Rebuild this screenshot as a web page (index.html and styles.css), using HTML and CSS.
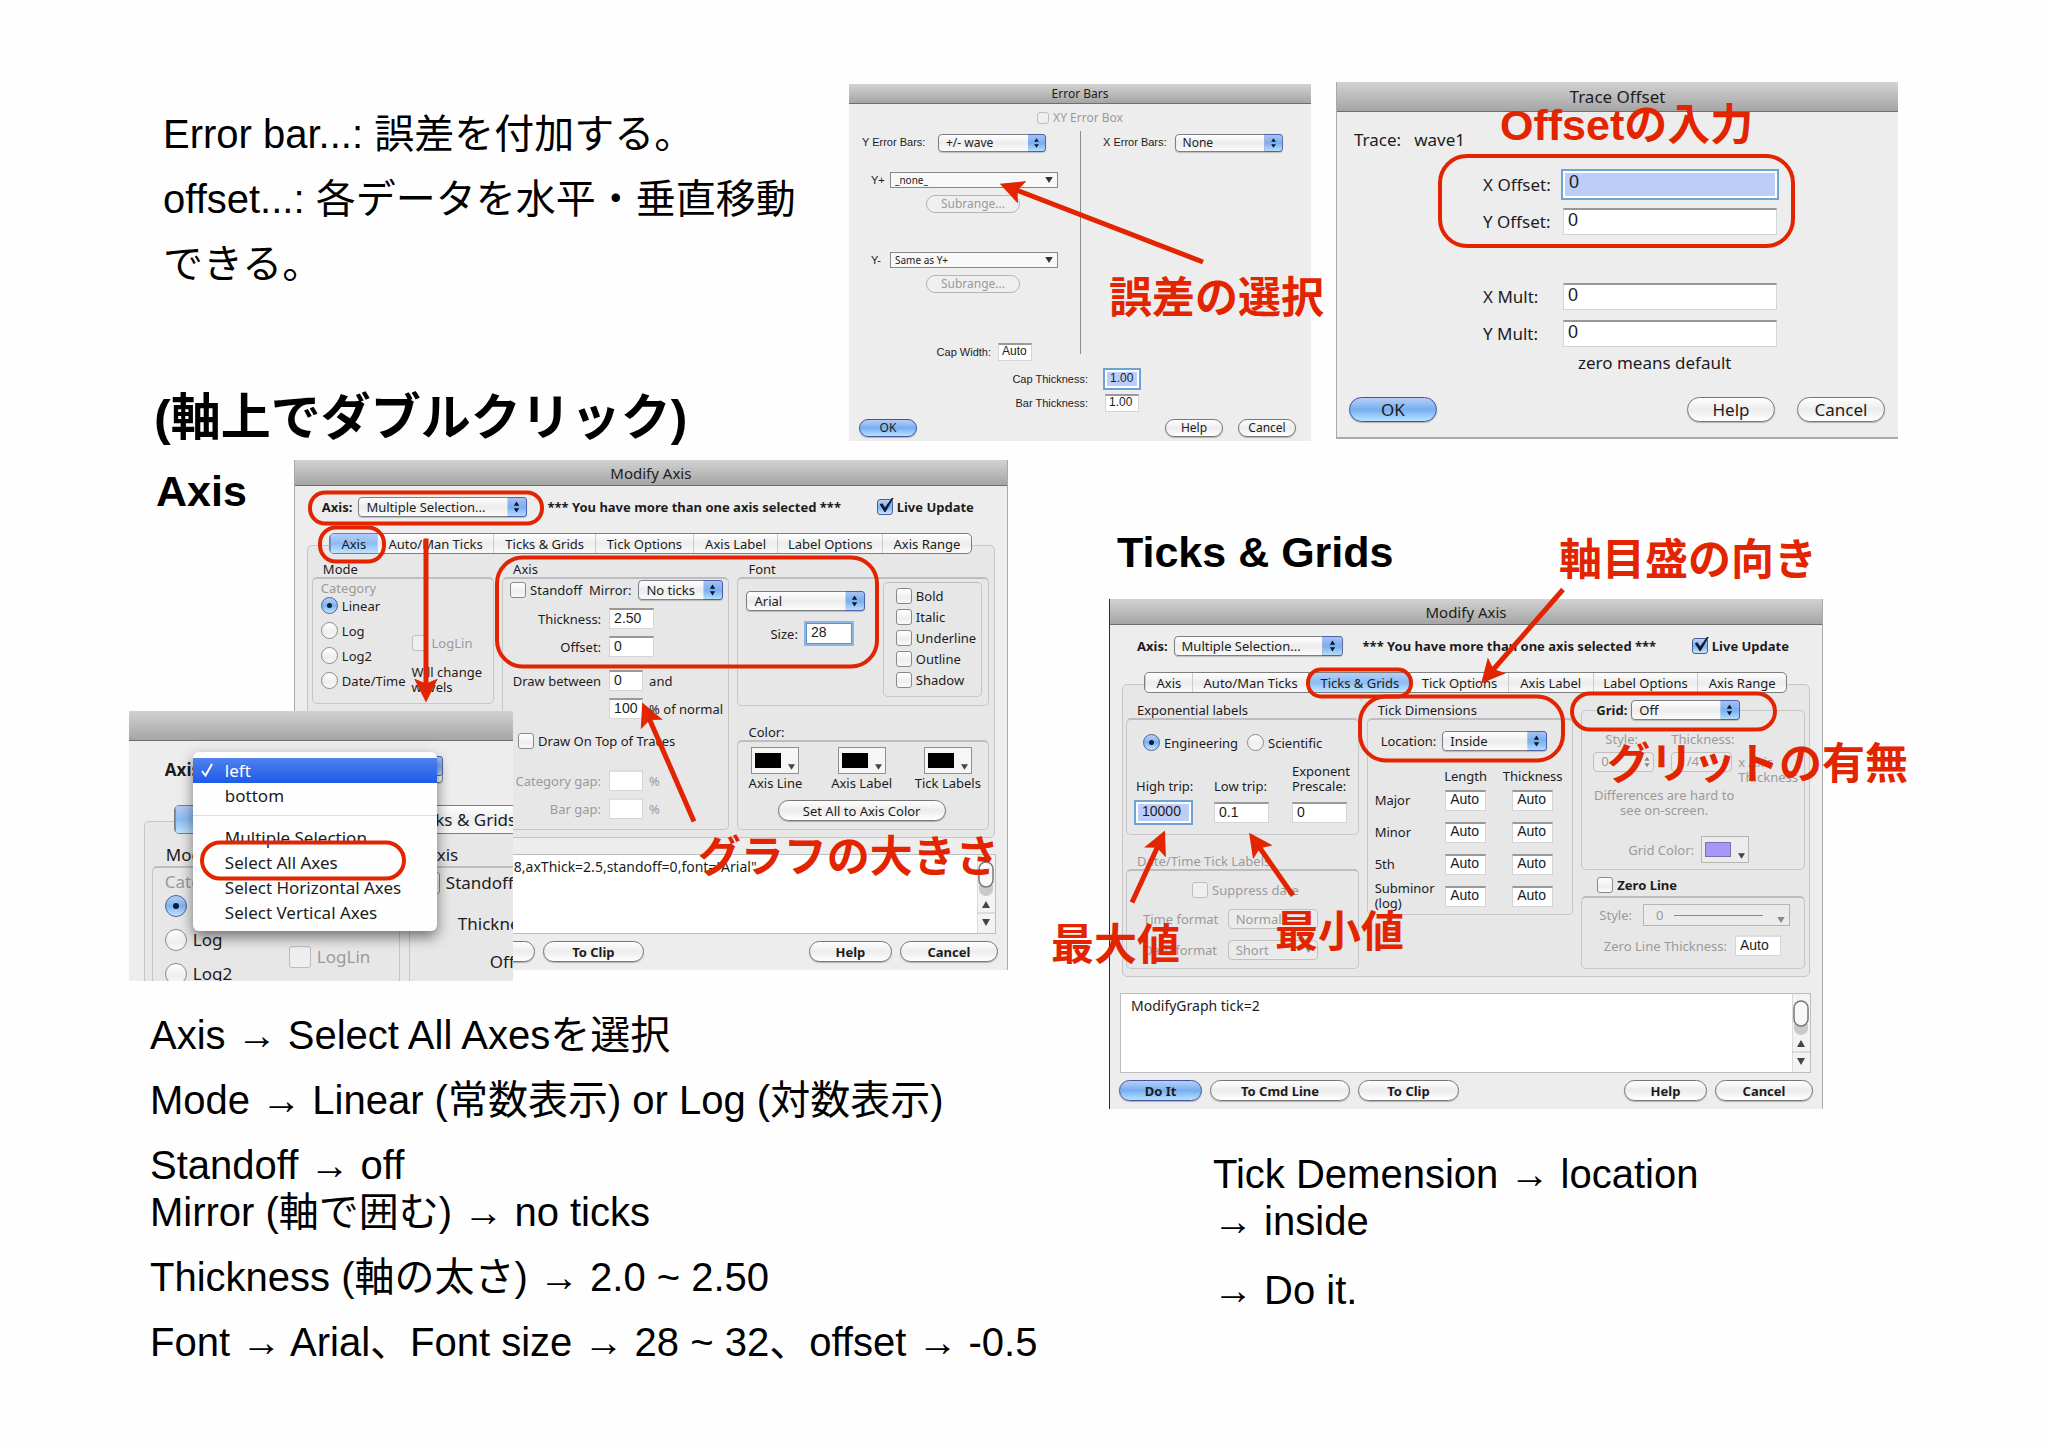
FILE: index.html
```html
<!DOCTYPE html>
<html lang="ja">
<head>
    <meta charset="UTF-8">
    <meta name="viewport" content="width=device-width, initial-scale=1.0">
    <title>Modify Axis</title>
    <link rel="stylesheet" href="styles.css">
</head>
<body>
    <!-- Shared shapes -->
    <svg class="defs" width="0" height="0" aria-hidden="true">
        <symbol id="updown" viewBox="0 0 14 20">
            <path d="M7 4l3 4.500H4zM7 16l3-4.500H4z" />
        </symbol>
        <symbol id="down" viewBox="0 0 10 8">
            <path d="M0 0h10L5 8z" />
        </symbol>
        <marker id="head" markerUnits="userSpaceOnUse" markerWidth="26" markerHeight="26" refX="12" refY="12" orient="auto">
            <path d="M24 12L0 0L5 12L0 24z" fill="#e22400" />
        </marker>
    </svg>

    <main class="slide">
        <section class="top">
            <div class="intro">
                <p>Error bar...: 誤差を付加する。</p>
                <p>offset...: 各データを水平・垂直移動できる。</p>
                <h1>(軸上でダブルクリック)</h1>
            </div>

            <!-- Error Bars -->
            <div class="figure error-figure">
                <form class="dialog error-bars">
                    <div class="titlebar">Error Bars</div>
                    <label class="check xy-box dim"><input type="checkbox" disabled> XY Error Box</label>
                    <div class="error-columns">
                        <div class="error-y">
                            <div class="line">
                                <label class="plain" for="yBars">Y Error Bars:</label>
                                <span class="popup"><select id="yBars"><option>+/- wave</option></select><svg><use href="#updown" /></svg></span>
                            </div>
                            <div class="line wave-line">
                                <label class="plain" for="yPlus">Y+</label>
                                <span class="combo"><select id="yPlus"><option>_none_</option></select><svg><use href="#down" /></svg></span>
                            </div>
                            <button type="button" class="btn dim" disabled>Subrange...</button>
                            <div class="line wave-line second">
                                <label class="plain" for="yMinus">Y-</label>
                                <span class="combo"><select id="yMinus"><option>Same as Y+</option></select><svg><use href="#down" /></svg></span>
                            </div>
                            <button type="button" class="btn dim" disabled>Subrange...</button>
                            <div class="line cap-line">
                                <label class="plain" for="capWidth">Cap Width:</label>
                                <input class="field" id="capWidth" type="text" value="Auto">
                            </div>
                        </div>
                        <div class="error-x">
                            <label class="plain" for="xBars">X Error Bars:</label>
                            <span class="popup"><select id="xBars"><option>None</option></select><svg><use href="#updown" /></svg></span>
                        </div>
                    </div>
                    <div class="thickness">
                        <label class="plain" for="capThick">Cap Thickness:</label>
                        <input class="field focus picked" id="capThick" type="text" value="1.00">
                        <label class="plain" for="barThick">Bar Thickness:</label>
                        <input class="field" id="barThick" type="text" value="1.00">
                    </div>
                    <div class="buttons">
                        <button type="button" class="btn primary">OK</button>
                        <button type="button" class="btn push">Help</button>
                        <button type="button" class="btn">Cancel</button>
                    </div>
                </form>
                <svg class="marks" viewBox="0 0 462 357" aria-hidden="true">
                    <line x1="354" y1="178" x2="162" y2="104" />
                </svg>
                <div class="caption cap-error">誤差の選択</div>
            </div>

            <!-- Trace Offset -->
            <div class="figure trace-figure">
                <form class="dialog trace-offset">
                    <div class="titlebar">Trace Offset</div>
                    <p class="trace-name"><span>Trace:</span> <span>wave1</span></p>
                    <div class="trace-grid">
                        <label for="xOffset">X Offset:</label>
                        <input class="field focus picked" id="xOffset" type="text" value="0">
                        <label for="yOffset">Y Offset:</label>
                        <input class="field" id="yOffset" type="text" value="0">
                    </div>
                    <div class="trace-grid mult">
                        <label for="xMult">X Mult:</label>
                        <input class="field" id="xMult" type="text" value="0">
                        <label for="yMult">Y Mult:</label>
                        <input class="field" id="yMult" type="text" value="0">
                    </div>
                    <p class="hint">zero means default</p>
                    <div class="buttons">
                        <button type="button" class="btn primary">OK</button>
                        <button type="button" class="btn push">Help</button>
                        <button type="button" class="btn">Cancel</button>
                    </div>
                </form>
                <svg class="marks" viewBox="0 0 562 357" aria-hidden="true">
                    <rect x="104" y="74" width="353" height="90" rx="27" />
                </svg>
                <div class="caption cap-offset">Offsetの入力</div>
            </div>
        </section>

        <section class="bottom">
            <div class="left">
                <div class="axis-row">
                    <h2>Axis</h2>

                    <!-- Modify Axis, first tab -->
                    <div class="figure">
                        <form class="dialog modify">
                            <div class="titlebar">Modify Axis</div>
                            <div class="select-row">
                                <label class="strong" for="axisA">Axis:</label>
                                <span class="popup"><select id="axisA"><option>Multiple Selection...</option></select><svg><use href="#updown" /></svg></span>
                                <span class="message">*** You have more than one axis selected ***</span>
                                <label class="check strong"><input type="checkbox" checked> Live Update</label>
                            </div>
                            <div class="tabs">
                                <button type="button" class="on">Axis</button>
                                <button type="button">Auto/Man Ticks</button>
                                <button type="button">Ticks &amp; Grids</button>
                                <button type="button">Tick Options</button>
                                <button type="button">Axis Label</button>
                                <button type="button">Label Options</button>
                                <button type="button">Axis Range</button>
                            </div>
                            <div class="pane axis-pane">
                                <div class="col">
                                    <h3>Mode</h3>
                                    <div class="box mode-box">
                                        <div class="radios">
                                            <span class="dim">Category</span>
                                            <label class="check"><input type="radio" name="mode" checked> Linear</label>
                                            <label class="check"><input type="radio" name="mode"> Log</label>
                                            <label class="check"><input type="radio" name="mode"> Log2</label>
                                            <label class="check"><input type="radio" name="mode"> Date/Time</label>
                                        </div>
                                        <div class="mode-side">
                                            <label class="check dim"><input type="checkbox" disabled> LogLin</label>
                                            <p>Will change<br>wavels</p>
                                        </div>
                                    </div>
                                </div>
                                <div class="col">
                                    <h3>Axis</h3>
                                    <div class="box axis-box">
                                        <div class="line standoff">
                                            <label class="check"><input type="checkbox"> Standoff</label>
                                            <label for="mirror">Mirror:</label>
                                            <span class="popup"><select id="mirror"><option>No ticks</option></select><svg><use href="#updown" /></svg></span>
                                        </div>
                                        <div class="pair">
                                            <label for="thick">Thickness:</label>
                                            <span><input class="field wide" id="thick" type="text" value="2.50"></span>
                                        </div>
                                        <div class="pair">
                                            <label for="offs">Offset:</label>
                                            <span><input class="field wide" id="offs" type="text" value="0"></span>
                                        </div>
                                        <div class="pair apart">
                                            <label for="from">Draw between</label>
                                            <span><input class="field" id="from" type="text" value="0"> and</span>
                                        </div>
                                        <div class="pair">
                                            <label for="to"></label>
                                            <span><input class="field" id="to" type="text" value="100" aria-label="Draw to"> % of normal</span>
                                        </div>
                                        <label class="check on-top"><input type="checkbox"> Draw On Top of Traces</label>
                                        <div class="pair dim far">
                                            <label for="catGap">Category gap:</label>
                                            <span><input class="field off" id="catGap" type="text" disabled> %</span>
                                        </div>
                                        <div class="pair dim">
                                            <label for="barGap">Bar gap:</label>
                                            <span><input class="field off" id="barGap" type="text" disabled> %</span>
                                        </div>
                                    </div>
                                </div>
                                <div class="col">
                                    <h3>Font</h3>
                                    <div class="box font-box">
                                        <div class="font-side">
                                            <span class="popup"><select aria-label="Font"><option>Arial</option></select><svg><use href="#updown" /></svg></span>
                                            <div class="line">
                                                <label for="size">Size:</label>
                                                <input class="field focus" id="size" type="text" value="28">
                                            </div>
                                        </div>
                                        <div class="box styles-box">
                                            <label class="check"><input type="checkbox"> Bold</label>
                                            <label class="check"><input type="checkbox"> Italic</label>
                                            <label class="check"><input type="checkbox"> Underline</label>
                                            <label class="check"><input type="checkbox"> Outline</label>
                                            <label class="check"><input type="checkbox"> Shadow</label>
                                        </div>
                                    </div>
                                    <h3 class="color-title">Color:</h3>
                                    <div class="box color-box">
                                        <div class="swatches">
                                            <label><button type="button" class="swatch"><i></i><svg><use href="#down" /></svg></button>Axis Line</label>
                                            <label><button type="button" class="swatch"><i></i><svg><use href="#down" /></svg></button>Axis Label</label>
                                            <label><button type="button" class="swatch"><i></i><svg><use href="#down" /></svg></button>Tick Labels</label>
                                        </div>
                                        <button type="button" class="btn">Set All to Axis Color</button>
                                    </div>
                                </div>
                            </div>
                            <div class="command">
                                <textarea class="scrolled" aria-label="Command">8,axThick=2.5,standoff=0,font="Arial"</textarea>
                                <svg class="scrollbar" viewBox="0 0 18 78" aria-hidden="true">
                                    <rect x="0" y="0" width="18" height="78" fill="#f3f3f3" />
                                    <path d="M0 0v78M0 58h18" stroke="#c4c4c4" />
                                    <path d="M2 30v4a7 7 0 0 0 14 0v-4" fill="#c9c9c9" />
                                    <rect x="2" y="7" width="14" height="25" rx="7" fill="#f8f8f8" stroke="#777" stroke-width="1.500" />
                                    <path d="M9 46l4 7H5zM9 71l4-7H5z" fill="#444" />
                                </svg>
                            </div>
                            <div class="buttons">
                                <button type="button" class="btn primary">Do It</button>
                                <button type="button" class="btn">To Cmd Line</button>
                                <button type="button" class="btn">To Clip</button>
                                <button type="button" class="btn push">Help</button>
                                <button type="button" class="btn">Cancel</button>
                            </div>
                        </form>

                        <!-- Close-up of the axis menu -->
                        <div class="dialog closeup">
                            <div class="titlebar"></div>
                            <div class="closeup-top">
                                <span class="strong">Axis:</span>
                                <span class="popup"><select aria-label="Axis"><option>left</option></select><svg><use href="#updown" /></svg></span>
                            </div>
                            <div class="tabs">
                                <button type="button" class="on">Axis</button>
                                <button type="button">Ticks &amp; Grids</button>
                            </div>
                            <div class="pane">
                                <div class="col">
                                    <h3>Mode</h3>
                                    <div class="box mode-box">
                                        <div class="radios">
                                            <span class="dim">Category</span>
                                            <label class="check"><input type="radio" name="mode2" checked> Linear</label>
                                            <label class="check"><input type="radio" name="mode2"> Log</label>
                                            <label class="check"><input type="radio" name="mode2"> Log2</label>
                                        </div>
                                        <label class="check dim"><input type="checkbox" disabled> LogLin</label>
                                    </div>
                                </div>
                                <div class="col">
                                    <h3>Axis</h3>
                                    <div class="box">
                                        <label class="check"><input type="checkbox"> Standoff</label>
                                        <p class="thick-word">Thickness:</p>
                                        <p class="offset-word">Offset:</p>
                                    </div>
                                </div>
                            </div>
                            <ul class="menu">
                                <li class="picked-item"><svg viewBox="0 0 12 14"><path d="M1 8l3.500 4.500L11 1" /></svg>left</li>
                                <li>bottom</li>
                                <li class="rule"></li>
                                <li>Multiple Selection</li>
                                <li>Select All Axes</li>
                                <li>Select Horizontal Axes</li>
                                <li>Select Vertical Axes</li>
                            </ul>
                        </div>

                        <svg class="marks" viewBox="0 0 714 509" aria-hidden="true">
                            <rect x="16" y="32" width="232" height="31" rx="15" />
                            <rect x="26" y="67" width="64" height="34" rx="16" />
                            <rect x="203" y="97" width="380" height="109" rx="26" />
                            <rect x="-92" y="382" width="202" height="36" rx="18" />
                            <line x1="132" y1="78" x2="132" y2="230" />
                            <line x1="400" y1="361" x2="353" y2="253" />
                        </svg>
                        <div class="caption cap-size">グラフの大きさ</div>
                    </div>
                </div>

                <div class="notes">
                    <p>Axis → Select All Axesを選択</p>
                    <p>Mode → Linear (常数表示) or Log (対数表示)</p>
                    <p>Standoff → off<br>Mirror (軸で囲む) → no ticks</p>
                    <p>Thickness (軸の太さ) → 2.0 ~ 2.50</p>
                    <p>Font → Arial、Font size → 28 ~ 32、offset → -0.5</p>
                </div>
            </div>

            <div class="right">
                <h2>Ticks &amp; Grids</h2>

                <!-- Modify Axis, third tab -->
                <div class="figure">
                    <form class="dialog modify dark-edge">
                        <div class="titlebar">Modify Axis</div>
                        <div class="select-row">
                            <label class="strong" for="axisB">Axis:</label>
                            <span class="popup"><select id="axisB"><option>Multiple Selection...</option></select><svg><use href="#updown" /></svg></span>
                            <span class="message">*** You have more than one axis selected ***</span>
                            <label class="check strong"><input type="checkbox" checked> Live Update</label>
                        </div>
                        <div class="tabs">
                            <button type="button">Axis</button>
                            <button type="button">Auto/Man Ticks</button>
                            <button type="button" class="on">Ticks &amp; Grids</button>
                            <button type="button">Tick Options</button>
                            <button type="button">Axis Label</button>
                            <button type="button">Label Options</button>
                            <button type="button">Axis Range</button>
                        </div>
                        <div class="pane ticks-pane">
                            <div class="col">
                                <h3>Exponential labels</h3>
                                <div class="box exp-box">
                                    <div class="line">
                                        <label class="check"><input type="radio" name="exp" checked> Engineering</label>
                                        <label class="check"><input type="radio" name="exp"> Scientific</label>
                                    </div>
                                    <div class="trips">
                                        <label for="high">High trip:</label>
                                        <label for="low">Low trip:</label>
                                        <label for="pre">Exponent Prescale:</label>
                                        <input class="field focus picked" id="high" type="text" value="10000">
                                        <input class="field" id="low" type="text" value="0.1">
                                        <input class="field" id="pre" type="text" value="0">
                                    </div>
                                </div>
                                <h3 class="dim date-title">Date/Time Tick Labels</h3>
                                <div class="box date-box dim">
                                    <label class="check"><input type="checkbox" disabled> Suppress date</label>
                                    <div class="line">
                                        <label for="timeFmt">Time format</label>
                                        <span class="popup off"><select id="timeFmt" disabled><option>Normal</option></select><svg><use href="#down" /></svg></span>
                                    </div>
                                    <div class="line">
                                        <label for="dateFmt">Date format</label>
                                        <span class="popup off"><select id="dateFmt" disabled><option>Short</option></select><svg><use href="#down" /></svg></span>
                                    </div>
                                </div>
                            </div>
                            <div class="col">
                                <h3>Tick Dimensions</h3>
                                <div class="box dims-box">
                                    <div class="line">
                                        <label for="loc">Location:</label>
                                        <span class="popup"><select id="loc"><option>Inside</option></select><svg><use href="#updown" /></svg></span>
                                    </div>
                                    <table>
                                        <tr><td></td><th>Length</th><th>Thickness</th></tr>
                                        <tr><th>Major</th><td><input class="field" type="text" value="Auto" aria-label="Major length"></td><td><input class="field" type="text" value="Auto" aria-label="Major thickness"></td></tr>
                                        <tr><th>Minor</th><td><input class="field" type="text" value="Auto" aria-label="Minor length"></td><td><input class="field" type="text" value="Auto" aria-label="Minor thickness"></td></tr>
                                        <tr><th>5th</th><td><input class="field" type="text" value="Auto" aria-label="5th length"></td><td><input class="field" type="text" value="Auto" aria-label="5th thickness"></td></tr>
                                        <tr><th>Subminor (log)</th><td><input class="field" type="text" value="Auto" aria-label="Subminor length"></td><td><input class="field" type="text" value="Auto" aria-label="Subminor thickness"></td></tr>
                                    </table>
                                </div>
                            </div>
                            <div class="col grid-col">
                                <fieldset class="grid-box dim">
                                    <legend>
                                        <label class="strong" for="grid">Grid:</label>
                                        <span class="popup"><select id="grid"><option>Off</option></select><svg><use href="#updown" /></svg></span>
                                    </legend>
                                    <div class="grid-controls">
                                        <label for="gStyle">Style:</label>
                                        <label for="gThick">Thickness:</label>
                                        <span></span>
                                        <span class="popup off"><select id="gStyle" disabled><option>0</option></select><svg><use href="#updown" /></svg></span>
                                        <span class="popup off"><select id="gThick" disabled><option>1/4</option></select><svg><use href="#updown" /></svg></span>
                                        <span class="times">x Axis Thickness</span>
                                    </div>
                                    <p class="differences">Differences are hard to<br>see on-screen.</p>
                                    <div class="line grid-color">
                                        <label for="gColor">Grid Color:</label>
                                        <button type="button" class="swatch violet" id="gColor" disabled><i></i><svg><use href="#down" /></svg></button>
                                    </div>
                                </fieldset>
                                <label class="check strong zero"><input type="checkbox"> Zero Line</label>
                                <div class="box zero-box dim">
                                    <div class="line">
                                        <label for="zStyle">Style:</label>
                                        <span class="combo line-combo"><select id="zStyle" disabled><option>0</option></select><i></i><svg><use href="#down" /></svg></span>
                                    </div>
                                    <div class="line zero-thick">
                                        <label for="zThick">Zero Line Thickness:</label>
                                        <input class="field off" id="zThick" type="text" value="Auto">
                                    </div>
                                </div>
                            </div>
                        </div>
                        <div class="command">
                            <textarea aria-label="Command">ModifyGraph tick=2</textarea>
                            <svg class="scrollbar" viewBox="0 0 18 78" aria-hidden="true">
                                <rect x="0" y="0" width="18" height="78" fill="#f3f3f3" />
                                <path d="M0 0v78M0 58h18" stroke="#c4c4c4" />
                                <path d="M2 30v4a7 7 0 0 0 14 0v-4" fill="#c9c9c9" />
                                <rect x="2" y="7" width="14" height="25" rx="7" fill="#f8f8f8" stroke="#777" stroke-width="1.500" />
                                <path d="M9 46l4 7H5zM9 71l4-7H5z" fill="#444" />
                            </svg>
                        </div>
                        <div class="buttons">
                            <button type="button" class="btn primary">Do It</button>
                            <button type="button" class="btn">To Cmd Line</button>
                            <button type="button" class="btn">To Clip</button>
                            <button type="button" class="btn push">Help</button>
                            <button type="button" class="btn">Cancel</button>
                        </div>
                    </form>
                    <svg class="marks" viewBox="0 0 714 509" aria-hidden="true">
                        <rect x="199" y="70" width="103" height="27" rx="13" />
                        <rect x="251" y="97" width="203" height="64" rx="26" />
                        <rect x="463" y="94" width="203" height="36" rx="18" />
                        <line x1="454" y1="-10" x2="380" y2="75" />
                        <line x1="23" y1="303" x2="51" y2="242" />
                        <line x1="184" y1="296" x2="147" y2="243" />
                    </svg>
                    <div class="caption cap-direction">軸目盛の向き</div>
                    <div class="caption cap-grid">グリットの有無</div>
                    <div class="caption cap-max">最大値</div>
                    <div class="caption cap-min">最小値</div>
                </div>

                <div class="notes">
                    <p>Tick Demension → location<br>→ inside</p>
                    <p>→ Do it.</p>
                </div>
            </div>
        </section>
    </main>
</body>
</html>
```

FILE: styles.css
```css
:root {
    --red: #e22400;
    --window: #eeedee;
    --pane: #e8e7e8;
    --dim: #9a9a9a;
    --line: #c6c6c8;
    --slide-font: "Liberation Sans", "Noto Sans CJK JP", sans-serif;
    --ui-font: "Noto Sans", "Open Sans", sans-serif;
}

* {
    box-sizing: border-box;
}

body {
    margin: 0;
    background: #fefefe;
    color: #000;
    font-family: var(--slide-font);
}

h1, h2, h3, p, ul {
    margin: 0;
    padding: 0;
}

.defs {
    position: absolute;
}

/* Slide */
.slide {
    padding: 82px 150px 40px;
}

.top {
    display: flex;
    align-items: flex-start;
}

.intro {
    flex: 1;
    padding: 20px 30px 0 0;
}

.intro p {
    padding-left: 13px;
    font-size: 40px;
    line-height: 65px;
}

h1 {
    padding-left: 4px;
    margin-top: 91px;
    font-size: 50px;
    line-height: 60px;
}

h2 {
    font-size: 43px;
    line-height: 50px;
}

.bottom {
    display: grid;
    grid-template-columns: 959fr 789fr;
    margin-top: 12px;
}

.axis-row {
    display: flex;
    align-items: flex-start;
    gap: 47px;
}

.axis-row h2 {
    padding: 6px 0 0 6px;
}

.right h2 {
    padding: 67px 0 22px 8px;
}

.notes {
    margin-top: 42px;
    font-size: 40px;
    line-height: 47px;
}

.notes p {
    margin-bottom: 18px;
}

.right .notes {
    margin-left: 104px;
}

.right .notes p {
    margin-bottom: 22px;
}

/* Figures: a dialog with red marks over it */
.figure {
    position: relative;
    width: fit-content;
}

.error-figure {
    margin: 2px 25px 0 0;
}

.marks {
    position: absolute;
    left: 0;
    top: 0;
    width: 100%;
    height: 100%;
    overflow: visible;
    pointer-events: none;
    fill: none;
    stroke: var(--red);
    stroke-width: 4px;
}

.marks line {
    stroke-width: 5px;
    marker-end: url(#head);
}

.caption {
    position: absolute;
    color: var(--red);
    font-size: 43px;
    font-weight: bold;
    line-height: 50px;
    white-space: nowrap;
}

.cap-error { left: 260px; top: 189px; }
.cap-offset { left: 164px; top: 18px; }
.cap-size { left: 404px; top: 372px; }
.cap-direction { left: 450px; top: -64px; }
.cap-grid { left: 498px; top: 140px; }
.cap-max { left: -58px; top: 321px; }
.cap-min { left: 166px; top: 308px; }

/* Dialogs */
.dialog {
    background: var(--window);
    color: #1c1c1c;
    font-family: var(--ui-font);
    font-size: 13px;
    line-height: 16px;
}

.titlebar {
    display: flex;
    align-items: center;
    justify-content: center;
    height: 26px;
    background: linear-gradient(#d2d2d2, #a6a5a6);
    border-bottom: 1px solid #6e6e6e;
    font-size: 15px;
}

.dialog h3 {
    font-size: 13px;
    font-weight: normal;
    padding-left: 11px;
}

.dim {
    color: var(--dim);
}

.strong {
    font-weight: bold;
}

.line {
    display: flex;
    align-items: center;
}

.plain {
    font-family: var(--slide-font);
}

.check {
    display: flex;
    align-items: center;
    gap: 4px;
    white-space: nowrap;
}

.check input {
    appearance: none;
    position: relative;
    flex: none;
    width: 16px;
    height: 16px;
    margin: 0;
    border: 1px solid #8a8a8a;
    border-radius: 3px;
    background: linear-gradient(#fff, #eee 60%, #fafafa);
}

.check input[type="radio"] {
    width: 17px;
    height: 17px;
    border-radius: 50%;
}

.check input:disabled {
    border-color: #bdbdbd;
    background: #efefef;
}

.check input:checked {
    border-color: #4a5f9c;
    background: linear-gradient(#b9d3f3, #7eb2ee 50%, #c3e6fc);
}

.check input[type="radio"]:checked::after {
    content: "";
    position: absolute;
    inset: 5px;
    border-radius: 50%;
    background: #0c1c3c;
}

.check input[type="checkbox"]:checked::after {
    content: "";
    position: absolute;
    left: 2px;
    top: -2px;
    width: 14px;
    height: 14px;
    background: #111a30;
    clip-path: polygon(0 45%, 18% 38%, 38% 68%, 86% 0, 100% 0, 42% 100%, 34% 100%);
}

.field {
    width: 34px;
    height: 21px;
    padding: 0 0 3px 4px;
    border: 1px solid #d5d5d5;
    border-top: 2px solid #999;
    border-radius: 0;
    outline: none;
    background: #fff;
    color: #1c1c1c;
    font-family: var(--slide-font);
    font-size: 14px;
}

.field.off {
    border-top-color: #ddd;
}

.field.focus {
    border: 1px solid #5b93cf;
    box-shadow: 0 0 0 2px #8db6e2;
}

.field.picked {
    background: #bccdf8;
    border: 2px solid #fff;
    box-shadow: 0 0 0 2px #6fa3d6;
}

.popup,
.combo {
    position: relative;
    display: inline-flex;
    height: 20px;
}

.popup select,
.combo select {
    appearance: none;
    width: 100%;
    height: 100%;
    padding: 0 18px 1px 7px;
    border: 1px solid #7d7d85;
    border-radius: 4px;
    background: linear-gradient(#fff, #ececec 50%, #fbfbfb);
    box-shadow: 0 1px 1px rgba(0, 0, 0, 0.2);
    color: #1c1c1c;
    opacity: 1;
    font: inherit;
    font-weight: normal;
}

.popup svg {
    position: absolute;
    right: 1px;
    top: 1px;
    width: 19px;
    height: 18px;
    border-radius: 0 3px 3px 0;
    background: linear-gradient(#a9c2f0, #77aef0 50%, #b5ddfb);
    box-shadow: 0 0 0 1px #4e60b0;
    clip-path: inset(-1px -1px -1px 0);
    fill: #0d1630;
}

.popup.off select {
    border-color: #c0c0c0;
    background: #ebebeb;
    box-shadow: none;
    color: var(--dim);
}

.popup.off svg {
    background: none;
    box-shadow: none;
    fill: #888;
}

.combo select {
    padding: 0 4px;
    border: 1px solid #888;
    border-radius: 0;
    background: #f8f8f8;
    box-shadow: none;
}

.combo svg {
    position: absolute;
    right: 5px;
    top: 5px;
    width: 8px;
    height: 6px;
    fill: #333;
}

.btn {
    height: 21px;
    padding: 0;
    border: 1px solid #777;
    border-radius: 11px;
    background: linear-gradient(#fff, #ececec 50%, #fff);
    box-shadow: 0 1px 1px rgba(0, 0, 0, 0.25);
    color: #1c1c1c;
    font: inherit;
    white-space: nowrap;
}

.btn.primary {
    border-color: #4552a0;
    background: linear-gradient(#b8cff5, #76aef0 50%, #b7e3ff);
}

.btn.dim {
    border-color: #b5b5b5;
    background: #efefef;
    box-shadow: none;
    color: var(--dim);
}

.buttons {
    display: flex;
}

.push {
    margin-left: auto;
}

.box {
    border: 1px solid var(--line);
    border-top: 2px solid #bdbdbf;
    border-radius: 5px;
}

.swatch {
    position: relative;
    width: 48px;
    height: 27px;
    padding: 0;
    border: 1px solid #8f8f8f;
    background: #f6f6f6;
}

.swatch i {
    position: absolute;
    left: 3px;
    top: 5px;
    width: 26px;
    height: 15px;
    background: #000;
}

.swatch svg {
    position: absolute;
    right: 3px;
    bottom: 3px;
    width: 7px;
    height: 6px;
    fill: #444;
}

.swatch.violet {
    background: #ececec;
    border-color: #b5b5b5;
}

.swatch.violet i {
    border: 1px solid #7a72a8;
    background: #a897f8;
}

/* Error Bars */
.error-bars {
    width: 462px;
    padding-bottom: 4px;
    font-size: 12px;
}

.error-bars .titlebar {
    height: 20px;
    font-size: 12px;
}

.xy-box {
    justify-content: center;
    padding: 6px 0 5px;
}

.error-bars .check input {
    width: 12px;
    height: 12px;
}

.error-columns {
    display: grid;
    grid-template-columns: 1fr 1fr;
}

.error-y {
    padding-top: 3px;
}

.error-y > .line:first-child {
    padding-left: 13px;
}

.error-bars .plain {
    font-size: 11px;
}

.error-bars .popup {
    width: 108px;
    height: 18px;
}

.error-bars .popup svg {
    width: 17px;
    height: 16px;
}

.error-y > .line:first-child {
    align-items: flex-start;
}

.error-y > .line:first-child .popup {
    margin-left: auto;
    margin-right: 34px;
}

.error-y .wave-line {
    padding-left: 22px;
    margin-top: 20px;
}

.error-y .wave-line.second {
    margin-top: 39px;
}

.wave-line label {
    width: 19px;
}

.error-y .combo {
    width: 168px;
    height: 16px;
}

.error-y .combo select {
    font-size: 10px;
    line-height: 12px;
}

.error-bars .btn {
    width: 58px;
    height: 18px;
}

.error-y .btn {
    display: block;
    width: 94px;
    margin: 7px 0 0 77px;
}

.cap-line {
    justify-content: flex-end;
    gap: 7px;
    padding-right: 48px;
    margin-top: 50px;
}

.error-bars .field {
    height: 18px;
    padding-left: 3px;
    font-size: 12px;
}

.error-x {
    display: flex;
    align-items: flex-start;
    gap: 8px;
    padding: 3px 0 0 22px;
    margin-bottom: 7px;
    border-left: 1px solid #8c8c8c;
}

.thickness {
    display: grid;
    grid-template-columns: 239px 35px;
    gap: 6px 17px;
    align-items: center;
    padding-top: 9px;
    text-align: right;
}

.error-bars .buttons {
    gap: 15px;
    padding: 7px 15px 0 10px;
}

/* Trace Offset */
.trace-offset {
    width: 562px;
    padding-bottom: 15px;
    border-left: 1px solid #aaa;
    border-bottom: 2px solid #aaa;
    font-size: 17px;
    line-height: 20px;
}

.trace-offset .titlebar {
    height: 30px;
    font-size: 17px;
}

.trace-name {
    display: flex;
    gap: 13px;
    padding: 18px 17px 21px;
}

.trace-grid {
    display: grid;
    grid-template-columns: 80px 214px;
    gap: 10px 0;
    align-items: center;
    padding-left: 146px;
}

.trace-grid.mult {
    margin-top: 48px;
}

.trace-grid .field {
    width: 100%;
    height: 27px;
    padding-bottom: 4px;
    font-size: 18px;
}

.hint {
    padding: 6px 0 0 241px;
}

.trace-offset .buttons {
    gap: 22px;
    padding: 24px 13px 0 12px;
}

.trace-offset .btn {
    width: 88px;
    height: 25px;
    border-radius: 13px;
}

/* Modify Axis */
.modify {
    width: 714px;
    padding-bottom: 8px;
    border-left: 1px solid #aaa;
    border-right: 1px solid #aaa;
}

.dark-edge {
    border-left-color: #2c2c3c;
}

.select-row {
    display: flex;
    align-items: center;
    padding: 11px 33px 0 27px;
}

.select-row .popup {
    width: 169px;
    margin-left: 6px;
}

.message {
    margin-left: 20px;
    font-weight: bold;
}

.select-row .check {
    margin-left: auto;
}

.tabs {
    position: relative;
    display: grid;
    grid-template-columns: 47fr 117fr 102fr 98fr 85fr 105fr 89fr;
    height: 21px;
    margin: 16px 35px 0 34px;
    border: 1px solid #7e7e7e;
    border-radius: 5px;
    overflow: hidden;
    background: linear-gradient(#fff, #ececec 50%, #fafafa);
}

.tabs button {
    padding: 0;
    border: 0;
    border-left: 1px solid #ccc;
    background: none;
    color: inherit;
    font: inherit;
    white-space: nowrap;
}

.tabs .on {
    border-color: #6f8fd0;
    background: linear-gradient(#b5cdf6, #8dbcf3 50%, #bfe4fe);
}

.pane {
    display: grid;
    gap: 8px;
    margin: -9px 12px 0;
    padding: 15px 5px 7px 4px;
    border: 1px solid var(--line);
    border-radius: 5px;
    background: var(--pane);
}

.modify .pane {
    min-height: 293px;
}

.axis-pane {
    grid-template-columns: 182fr 227fr 251fr;
}

.col {
    display: flex;
    flex-direction: column;
    min-width: 0;
}

.mode-box {
    display: flex;
    gap: 6px;
    padding: 1px 0 8px 8px;
}

.radios {
    display: flex;
    flex-direction: column;
    gap: 8px;
}

.radios .dim {
    margin-bottom: -7px;
}

.mode-side {
    padding-top: 55px;
}

.mode-side p {
    margin-top: 14px;
    line-height: 15px;
    white-space: nowrap;
}

.axis-box {
    display: flex;
    flex: 1;
    flex-direction: column;
    gap: 7px;
    padding: 1px 5px 0 7px;
}

.standoff {
    gap: 7px;
    margin-bottom: 1px;
}

.standoff .popup {
    flex: 1;
}

.pair {
    display: grid;
    grid-template-columns: 91px auto;
    gap: 8px;
    text-align: right;
    white-space: nowrap;
}

.pair span {
    display: flex;
    align-items: center;
    gap: 6px;
}

.pair label {
    align-self: center;
}

.field.wide {
    width: 45px;
}

.apart {
    margin-top: 6px;
}

.on-top {
    margin: 7px 0 0 8px;
}

.far {
    margin-top: 14px;
}

.font-box {
    display: flex;
    justify-content: space-between;
    padding: 3px 6px 8px 8px;
}

.font-side {
    display: flex;
    flex-direction: column;
    gap: 12px;
    padding-top: 9px;
}

.font-side .popup {
    width: 119px;
}

.font-side .line {
    gap: 8px;
    padding-left: 24px;
}

.font-side .field {
    width: 46px;
}

.styles-box {
    display: flex;
    flex-direction: column;
    gap: 5px;
    width: 99px;
    padding: 5px 0 8px 12px;
    border-top-width: 1px;
}

.dialog .color-title {
    margin-top: 18px;
}

.color-box {
    flex: 1;
    padding: 5px 16px 6px 13px;
    text-align: center;
}

.swatches {
    display: flex;
    justify-content: space-between;
}

.swatches label {
    display: flex;
    flex-direction: column;
    align-items: center;
    gap: 1px;
    width: 48px;
    white-space: nowrap;
}

.color-box .btn {
    width: 168px;
    margin-top: 9px;
}

.command {
    display: flex;
    height: 80px;
    margin: 16px 11px 0 10px;
    border: 1px solid #bdbdbd;
    background: #fff;
}

.command textarea {
    flex: 1;
    padding: 3px 10px;
    border: 0;
    outline: none;
    resize: none;
    background: #fff;
    color: #1c1c1c;
    font-family: var(--ui-font);
    font-size: 14px;
    line-height: 18px;
}

.command .scrolled {
    padding-left: 208px;
}

.scrollbar {
    width: 18px;
    height: 78px;
}

.modify .buttons {
    gap: 8px;
    padding: 7px 9px 0;
}

.modify .buttons .btn {
    width: 83px;
    font-weight: bold;
}

.modify .buttons .btn:nth-child(2) { width: 140px; }
.modify .buttons .btn:nth-child(3) { width: 101px; }
.modify .buttons .btn:nth-child(5) { width: 98px; }

/* Ticks & Grids tab */
.ticks-pane {
    grid-template-columns: 233fr 207fr 224fr;
    padding: 17px 4px 7px 3px;
}

.exp-box {
    padding: 14px 11px 11px 9px;
}

.exp-box .line {
    gap: 9px;
    padding-left: 7px;
}

.trips {
    display: grid;
    grid-template-columns: 55px 55px 55px;
    gap: 8px 23px;
    align-items: end;
    margin-top: 13px;
    line-height: 15px;
    white-space: nowrap;
}

.trips label {
    white-space: normal;
    margin-right: -10px;
}

.trips .field {
    width: 100%;
}

.dialog .date-title {
    margin-top: 18px;
}

.date-box {
    display: flex;
    flex: 1;
    flex-direction: column;
    gap: 11px;
    padding: 11px 16px 0;
}

.date-box .check {
    padding-left: 49px;
}

.date-box .line {
    justify-content: space-between;
    padding-right: 24px;
}

.date-box .popup {
    width: 90px;
}

.popup.off svg {
    width: 12px;
}

.date-box .popup svg {
    top: 7px;
    right: 6px;
    width: 7px;
    height: 6px;
}

.dims-box {
    padding: 11px 0 2px 7px;
}

.dims-box .line {
    gap: 6px;
    padding-left: 6px;
}

.dims-box .popup {
    width: 105px;
}

.dims-box table {
    margin-top: 17px;
    border-collapse: collapse;
    line-height: 15px;
}

.dims-box td,
.dims-box th {
    width: 58px;
    height: 32px;
    padding: 0;
    font-weight: normal;
    text-align: center;
}

.dims-box tr:first-child > * {
    height: 16px;
}

.dims-box tr > :first-child {
    width: 62px;
    text-align: left;
}

.dims-box tr > :last-child {
    width: 76px;
}

.dims-box .field {
    width: 41px;
}

.grid-col {
    margin-top: -2px;
}

.grid-box {
    min-width: 0;
    margin: 0;
    padding: 12px 11px 6px;
    border: 1px solid var(--line);
    border-radius: 5px;
}

.grid-box legend {
    display: flex;
    align-items: center;
    gap: 4px;
    padding: 0;
    margin-left: 3px;
    color: #1c1c1c;
}

.grid-box legend .popup {
    width: 109px;
}

.grid-controls {
    display: grid;
    grid-template-columns: 61px 61px auto;
    gap: 5px 17px;
    line-height: 15px;
}

.grid-controls .popup {
    height: 20px;
}

.grid-controls label:first-child {
    padding-left: 12px;
}

.times {
    height: 20px;
    margin: 3px 0 0 -11px;
}

.differences {
    margin-top: 13px;
    padding-right: 58px;
    line-height: 15px;
    text-align: center;
    white-space: nowrap;
}

.grid-color {
    justify-content: flex-end;
    gap: 7px;
    padding-right: 44px;
    margin-top: 18px;
}

.zero {
    padding-left: 16px;
    margin: 7px 0 3px;
}

.zero-box {
    flex: 1;
    padding: 6px 14px 0 17px;
}

.zero-box .line {
    justify-content: space-between;
}

.line-combo {
    width: 147px;
    height: 22px;
}

.line-combo select {
    padding-left: 12px;
    border-color: #b5b5b5;
    background: #ebebeb;
    color: var(--dim);
}

.line-combo i {
    position: absolute;
    left: 31px;
    right: 27px;
    top: 11px;
    height: 1px;
    background: #888;
}

.line-combo svg {
    top: 13px;
    fill: #888;
}

.zero-box .zero-thick {
    justify-content: flex-end;
    gap: 8px;
    padding-right: 9px;
    margin-top: 9px;
}

.zero-thick .field {
    width: 46px;
}

/* Close-up window laid over the first dialog */
.closeup {
    position: absolute;
    left: -165px;
    top: 251px;
    width: 384px;
    height: 270px;
    overflow: hidden;
    font-size: 17px;
    line-height: 22px;
}

.closeup .titlebar {
    height: 30px;
}

.closeup h3 {
    padding-left: 14px;
    font-size: 17px;
}

.closeup-top {
    display: flex;
    align-items: center;
    padding: 15px 70px 0 36px;
}

.closeup-top .popup {
    flex: 1;
    height: 27px;
}

.closeup .tabs {
    grid-template-columns: 220fr 142fr;
    width: 362px;
    height: 29px;
    margin: 22px 0 0 45px;
}

.closeup .pane {
    grid-template-columns: 248px 280px;
    gap: 9px;
    width: 600px;
    margin: -13px 0 0 15px;
    padding: 22px 0 0 7px;
}

.closeup .mode-box {
    align-items: flex-start;
    height: 220px;
    padding: 3px 0 0 12px;
}

.closeup .radios {
    gap: 12px;
    width: 118px;
}

.closeup .radios .dim {
    margin-bottom: -10px;
}

.closeup .check {
    gap: 6px;
}

.closeup .check input {
    width: 22px;
    height: 22px;
}

.closeup .check input[type="radio"]:checked::after {
    inset: 7px;
}

.closeup .mode-box > .check {
    padding-top: 75px;
}

.closeup .col:last-child .box {
    height: 220px;
    padding: 4px 0 0 8px;
}

.closeup .col:last-child h3 {
    padding-left: 17px;
}

.thick-word {
    padding: 19px 0 0 40px;
}

.offset-word {
    padding: 16px 0 0 72px;
}

.menu {
    position: absolute;
    left: 64px;
    top: 41px;
    width: 244px;
    padding: 6px 0;
    border-radius: 6px;
    background: #fefefe;
    box-shadow: 0 6px 14px rgba(0, 0, 0, 0.5);
    list-style: none;
}

.menu li {
    position: relative;
    padding-left: 32px;
    line-height: 25px;
}

.menu .rule {
    height: 1px;
    margin: 7px 0 9px;
    background: #dcdcdc;
}

.menu .picked-item {
    background: linear-gradient(#4f82ee, #1d5be8);
    color: #fff;
}

.menu svg {
    position: absolute;
    left: 8px;
    top: 5px;
    width: 12px;
    height: 14px;
    fill: none;
    stroke: #fff;
    stroke-width: 2px;
}
```
